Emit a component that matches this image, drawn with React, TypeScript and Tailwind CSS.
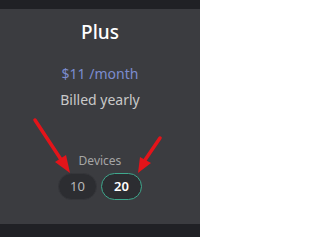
export default function App() {
  return (
    <div
      className="relative flex h-[237px] w-[200px] flex-col bg-[#202125]"
      style={{ fontFamily: '"Noto Sans", "Open Sans", sans-serif' }}
    >
      <div className="mt-[9px] flex h-[215px] flex-col items-center bg-[#3b3c40] pt-[10px]">
        <h2 className="text-[19px] leading-[26px] font-medium text-white">Plus</h2>
        <p className="mt-[19px] text-[14px] leading-[20px] text-[#7c8ccf]">$11 /month</p>
        <p className="mt-[6px] text-[14px] leading-[20px] text-[#c9c9c9]">Billed yearly</p>
        <p className="mt-[43px] text-[12px] leading-[16px] text-[#a6a6a6]">Devices</p>
        <div className="mt-[4px] flex gap-[4px]">
          <button className="flex h-[27px] w-[39px] items-center justify-center rounded-full border border-[#35363a] bg-[#2c2d31] text-[13px] text-[#b9b9b9]">
            10
          </button>
          <button className="flex h-[27px] w-[41px] items-center justify-center rounded-full border-[1.5px] border-[#3fa88d] bg-[#2c2d31] text-[13px] font-semibold text-white">
            20
          </button>
        </div>
      </div>

      {/* flechas rojas de anotación */}
      <svg className="pointer-events-none absolute inset-0" width="200" height="237" viewBox="0 0 200 237">
        <line x1="35" y1="120" x2="62" y2="161" stroke="#e3141a" strokeWidth="3.5" strokeLinecap="round" />
        <polygon points="70,173 55,162 66,155" fill="#e3141a" />
        <line x1="160" y1="138" x2="145" y2="160" stroke="#e3141a" strokeWidth="3.5" strokeLinecap="round" />
        <polygon points="138,173 140,157 151,163" fill="#e3141a" />
      </svg>
    </div>
  );
}
